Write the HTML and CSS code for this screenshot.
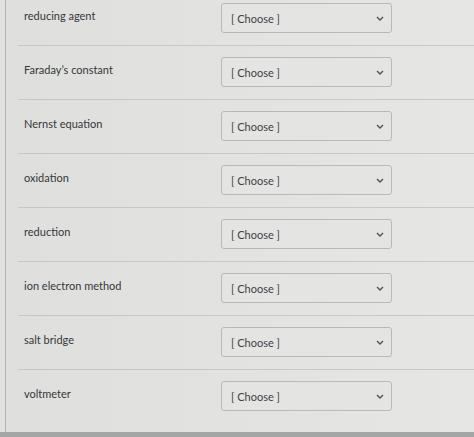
FILE: index.html
```html
<!DOCTYPE html>
<html>
<head>
<meta charset="utf-8">
<link rel="stylesheet" href="styles.css">
</head>
<body>
<div class="frame">
  <div class="list">
    <div class="row"><span class="label">reducing agent</span><div class="select"><span>[ Choose ]</span><svg class="chev" viewBox="0 0 8 5"><path d="M1 1 L4 4 L7 1" /></svg></div></div>
    <div class="row"><span class="label">Faraday’s constant</span><div class="select"><span>[ Choose ]</span><svg class="chev" viewBox="0 0 8 5"><path d="M1 1 L4 4 L7 1" /></svg></div></div>
    <div class="row"><span class="label">Nernst equation</span><div class="select"><span>[ Choose ]</span><svg class="chev" viewBox="0 0 8 5"><path d="M1 1 L4 4 L7 1" /></svg></div></div>
    <div class="row"><span class="label">oxidation</span><div class="select"><span>[ Choose ]</span><svg class="chev" viewBox="0 0 8 5"><path d="M1 1 L4 4 L7 1" /></svg></div></div>
    <div class="row"><span class="label">reduction</span><div class="select"><span>[ Choose ]</span><svg class="chev" viewBox="0 0 8 5"><path d="M1 1 L4 4 L7 1" /></svg></div></div>
    <div class="row"><span class="label">ion electron method</span><div class="select"><span>[ Choose ]</span><svg class="chev" viewBox="0 0 8 5"><path d="M1 1 L4 4 L7 1" /></svg></div></div>
    <div class="row"><span class="label">salt bridge</span><div class="select"><span>[ Choose ]</span><svg class="chev" viewBox="0 0 8 5"><path d="M1 1 L4 4 L7 1" /></svg></div></div>
    <div class="row last"><span class="label">voltmeter</span><div class="select"><span>[ Choose ]</span><svg class="chev" viewBox="0 0 8 5"><path d="M1 1 L4 4 L7 1" /></svg></div></div>
  </div>
</div>
<div class="bottom"></div>
</body>
</html>
```

FILE: styles.css
```css
html, body {
  margin: 0;
  padding: 0;
  width: 474px;
  height: 437px;
  overflow: hidden;
  background: #e1e2e0;
  font-family: Lato, "Liberation Sans", sans-serif;
}
.frame {
  margin-left: 5px;
  height: 432px;
  border-left: 1.5px solid #b3b5b3;
  background: linear-gradient(90deg, #dfe0de 0%, #e3e4e2 60%, #e6e7e5 100%);
  overflow: hidden;
}
.list {
  margin-top: -8px;
  padding-left: 12px;
}
.row {
  display: flex;
  align-items: flex-start;
  height: 54px;
  box-sizing: border-box;
  padding-top: 11px;
  padding-left: 6px;
  border-bottom: 1px solid #c6c8c5;
}
.row.last {
  border-bottom: none;
}
.label {
  width: 197px;
  margin-top: 4px;
  font-size: 11px;
  line-height: 18px;
  color: #35373a;
}
.select {
  width: 171px;
  height: 30px;
  box-sizing: border-box;
  border: 1px solid #b8bab7;
  border-radius: 3px;
  background: #e4e5e3;
  display: flex;
  align-items: center;
  justify-content: space-between;
  padding: 0 7px 0 9px;
  font-size: 11px;
  color: #3f4144;
}
.chev {
  width: 8px;
  height: 5px;
  fill: none;
  stroke: #505255;
  stroke-width: 1.4;
}
.bottom {
  height: 5px;
  background: #a4a6a5;
}
```
